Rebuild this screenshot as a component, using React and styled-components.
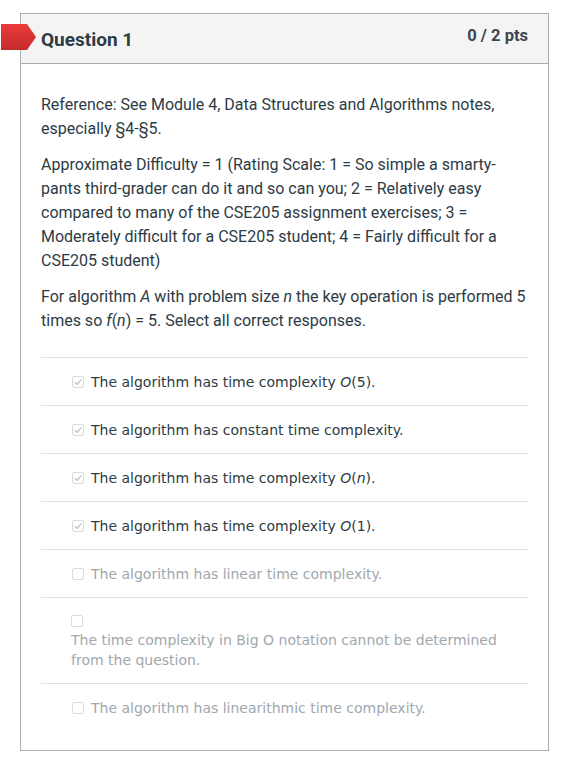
import React from "react";
import styled, { createGlobalStyle } from "styled-components";

const Global = createGlobalStyle`
  html, body { margin: 0; padding: 0; background: #fff; }
  body { font-family: Roboto, "Noto Sans", sans-serif; color: #2d3b45; }
  * { box-sizing: border-box; }
`;

const Page = styled.div`
  padding: 13px 15px 0 20px;
  width: 564px;
`;

const Card = styled.div`
  position: relative;
  width: 529px;
  border: 1px solid #a5afb5;
  background: #fff;
`;

const Flag = styled.div`
  position: absolute;
  left: -20px;
  top: 10px;
  width: 35px;
  height: 26px;
  background: linear-gradient(#ec3b3b, #c42b2b);
  clip-path: polygon(0 0, 26px 0, 35px 13px, 26px 26px, 0 26px);
`;

const Header = styled.div`
  display: flex;
  justify-content: space-between;
  align-items: flex-start;
  height: 50px;
  background: #f4f4f4;
  border-bottom: 1px solid #a5afb5;
  padding: 0 20px;
`;

const Title = styled.h2`
  margin: 0;
  padding-top: 15px;
  font-family: Roboto, sans-serif;
  font-weight: 700;
  font-size: 19px;
  line-height: 22px;
  color: #2d3b45;
`;

const Points = styled.div`
  padding-top: 12px;
  font-family: Roboto, sans-serif;
  font-weight: 700;
  font-size: 16.5px;
  line-height: 20px;
  color: #3d464d;
`;

const Body = styled.div`
  padding: 29px 20px 19px 20px;
`;

const Para = styled.p`
  margin: 0 0 12px;
  font-size: 16px;
  line-height: 24px;
  color: #2d3b45;
`;

const Answers = styled.div`
  margin-top: 24px;
`;

const Answer = styled.label`
  display: block;
  border-top: 1px solid #dfe2e5;
  padding: 14px 0 13px 30px;
  font-family: "DejaVu Sans", Verdana, sans-serif;
  font-size: 14px;
  line-height: 20px;
  color: ${(p) => (p.$checked ? "#2d3b45" : "#a0a8ae")};
`;

const Row = styled.span`
  display: ${(p) => (p.$stack ? "block" : "flex")};
  align-items: center;
`;

const Box = styled.span`
  display: ${(p) => (p.$stack ? "flex" : "inline-flex")};
  align-items: center;
  justify-content: center;
  width: 12px;
  height: 12px;
  margin: ${(p) => (p.$stack ? "3px 0 3px 0" : "0 7px 0 1px")};
  border: 1px solid #d9dcdf;
  border-radius: 2px;
  background: #fff;
  flex: none;
`;

const Text = styled.span`
  display: block;
`;

const Check = () => (
  <svg width="10" height="10" viewBox="0 0 10 10">
    <path d="M1.8 5.2 L4 7.4 L8.4 2.4" fill="none" stroke="#b7bcc0" strokeWidth="1.2" />
  </svg>
);

const answers = [
  { c: true, t: <>The algorithm has time complexity <i>O</i>(5).</> },
  { c: true, t: <>The algorithm has constant time complexity.</> },
  { c: true, t: <>The algorithm has time complexity <i>O</i>(<i>n</i>).</> },
  { c: true, t: <>The algorithm has time complexity <i>O</i>(1).</> },
  { c: false, t: <>The algorithm has linear time complexity.</> },
  {
    c: false,
    stack: true,
    t: <>The time complexity in Big O notation cannot be determined from the question.</>,
  },
  { c: false, t: <>The algorithm has linearithmic time complexity.</> },
];

export default function App() {
  return (
    <>
      <Global />
      <Page>
        <Card>
          <Flag />
          <Header>
            <Title>Question 1</Title>
            <Points>0 / 2 pts</Points>
          </Header>
          <Body>
            <Para>
              Reference: See Module 4, Data Structures and Algorithms notes,
              especially §4-§5.
            </Para>
            <Para>
              Approximate Difficulty = 1 (Rating Scale: 1 = So simple a smarty-pants
              third-grader can do it and so can you; 2 = Relatively easy compared to
              many of the CSE205 assignment exercises; 3 = Moderately difficult for a
              CSE205 student; 4 = Fairly difficult for a CSE205 student)
            </Para>
            <Para>
              For algorithm <i>A</i> with problem size <i>n</i> the key operation is
              performed 5 times so <i>f</i>(<i>n</i>) = 5. Select all correct responses.
            </Para>
            <Answers>
              {answers.map((a, i) => (
                <Answer key={i} $checked={a.c}>
                  <Row $stack={a.stack}>
                    <Box $stack={a.stack}>{a.c && <Check />}</Box>
                    <Text>{a.t}</Text>
                  </Row>
                </Answer>
              ))}
            </Answers>
          </Body>
        </Card>
      </Page>
    </>
  );
}
